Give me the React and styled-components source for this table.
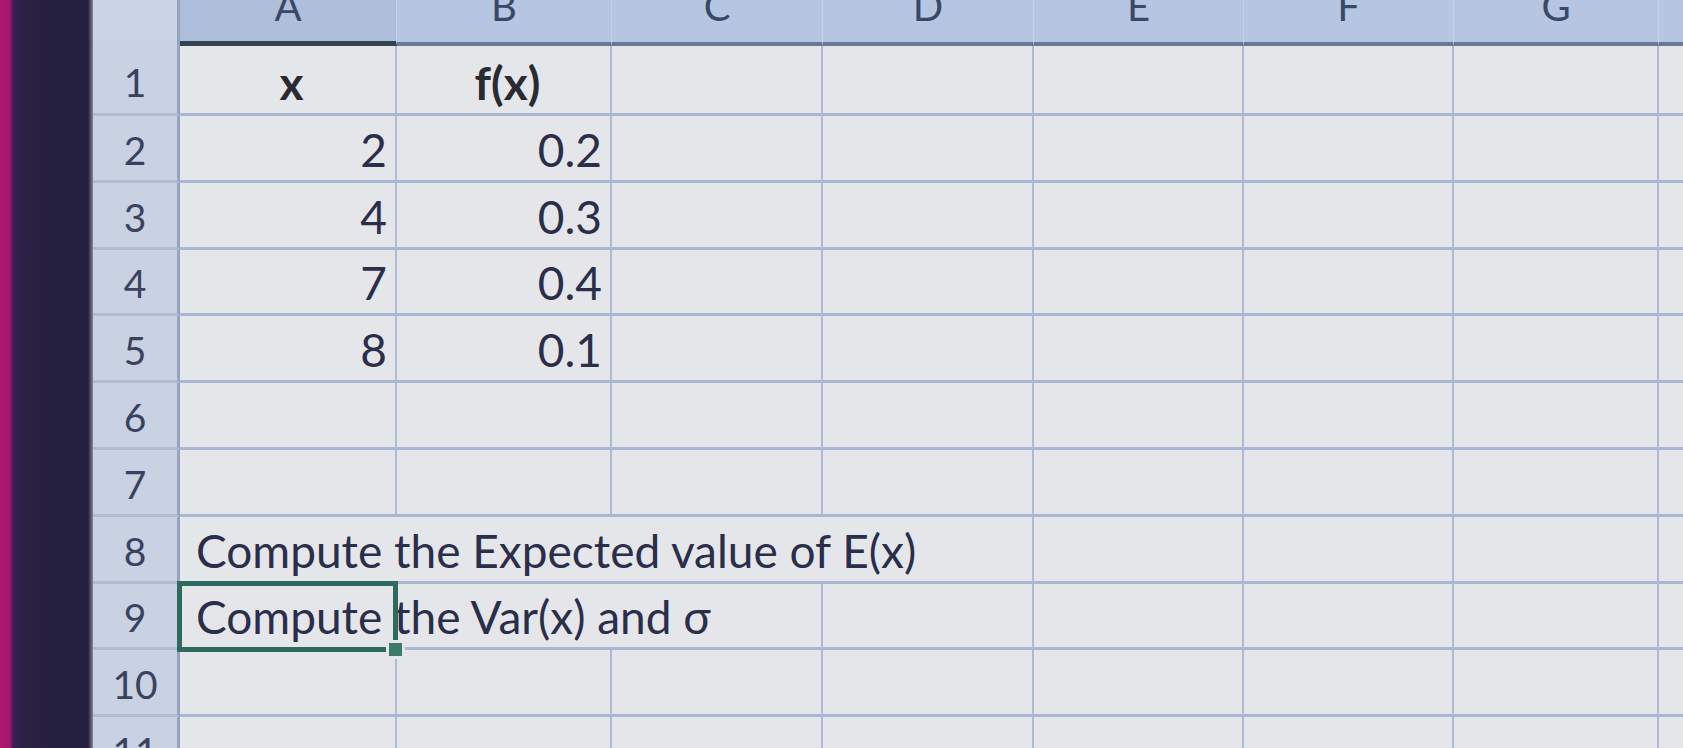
import React from "react";
import styled, { createGlobalStyle } from "styled-components";

const COL_WIDTHS = [217, 215, 211, 211, 210, 210, 205, 205];
const LETTERS = ["A", "B", "C", "D", "E", "F", "G", "H"];
const ROW_HEADER_W = 87;

const GlobalStyle = createGlobalStyle`
  html, body { margin: 0; padding: 0; overflow: hidden; background: #e4e6ea; }
  * { box-sizing: border-box; }
`;

const Screen = styled.div`
  display: flex;
  width: 100vw;
  height: 100vh;
  overflow: hidden;
  background: #e4e6ea;
`;

const Bezel = styled.div`
  width: 93px;
  flex-shrink: 0;
  background: linear-gradient(
    to right,
    #b3166f 0px,
    #a0186a 10px,
    #3f1d55 13px,
    #2e2046 20px,
    #272040 40px,
    #252040 88px,
    #5d5868 91px,
    #8d8790 93px
  );
`;

const Sheet = styled.div`
  display: grid;
  grid-template-columns: ${ROW_HEADER_W}px ${COL_WIDTHS.map((w) => w + "px").join(" ")};
  grid-template-rows: 70px 70px;
  grid-auto-rows: 66.8px;
  margin-top: -24px;
  align-content: start;
  flex-shrink: 0;
  font-family: Lato, "Open Sans", "Liberation Sans", sans-serif;
`;

const Corner = styled.div`
  background: #c9d3e4;
  border-right: 3px solid #97a3bf;
`;

const ColHeader = styled.div`
  display: flex;
  align-items: flex-end;
  justify-content: center;
  background: ${(p) => (p.$active ? "#aebfdc" : "#b6c5e1")};
  border-right: 1px solid #c6d0e6;
  border-bottom: ${(p) => (p.$active ? "5px solid #34424e" : "4px solid #6d7898")};
  color: #3a4868;
  font-size: 40px;
  font-weight: 400;
  line-height: 1;
  padding-bottom: ${(p) => (p.$active ? 15 : 16)}px;
`;

const RowHeader = styled.div`
  display: flex;
  align-items: center;
  justify-content: center;
  background: #c8d2e3;
  border-right: 3px solid #97a3bf;
  border-bottom: 3px solid #b0bbd2;
  color: #39435e;
  font-size: 39px;
  font-weight: 400;
  line-height: 1;
  padding-top: 5px;
`;

const Cell = styled.div`
  position: relative;
  display: flex;
  align-items: flex-end;
  justify-content: ${(p) =>
    p.$align === "right" ? "flex-end" : p.$align === "center" ? "center" : "flex-start"};
  grid-column: span ${(p) => p.$span || 1};
  border-right: 2px solid #aebbd7;
  border-bottom: 3px solid #aab7d4;
  padding: 0 8px 7px 16px;
  color: ${(p) => (p.$bold ? "#2a2a33" : "#2a2e4a")};
  font-size: 46px;
  font-weight: ${(p) => (p.$bold ? 700 : 400)};
  line-height: 1;
  white-space: nowrap;
`;

const Selection = styled.div`
  position: absolute;
  z-index: 2;
  left: -3px;
  top: -3px;
  width: ${COL_WIDTHS[0] + 4}px;
  height: 71px;
  border: 5px solid #2f6a60;
  pointer-events: none;
`;

const FillHandle = styled.div`
  position: absolute;
  right: -12px;
  bottom: -12px;
  width: 19px;
  height: 19px;
  background: #3c7a6a;
  border: 3px solid #e4e6ea;
`;

const ROWS = [
  { n: 1, cells: [{ text: "x", bold: true, align: "center" }, { text: "f(x)", bold: true, align: "center" }] },
  { n: 2, cells: [{ text: "2", align: "right" }, { text: "0.2", align: "right" }] },
  { n: 3, cells: [{ text: "4", align: "right" }, { text: "0.3", align: "right" }] },
  { n: 4, cells: [{ text: "7", align: "right" }, { text: "0.4", align: "right" }] },
  { n: 5, cells: [{ text: "8", align: "right" }, { text: "0.1", align: "right" }] },
  { n: 6, cells: [] },
  { n: 7, cells: [] },
  { n: 8, cells: [{ text: "Compute the Expected value of E(x)", span: 4 }] },
  { n: 9, cells: [{ text: "Compute the Var(x) and σ", span: 3, selected: true }] },
  { n: 10, cells: [] },
  { n: 11, cells: [] },
];

function SheetRow({ row }) {
  const out = [<RowHeader key="h">{row.n}</RowHeader>];
  let used = 0;
  row.cells.forEach((c, i) => {
    out.push(
      <Cell key={i} $align={c.align} $bold={c.bold} $span={c.span}>
        {c.text}
        {c.selected && (
          <Selection>
            <FillHandle />
          </Selection>
        )}
      </Cell>
    );
    used += c.span || 1;
  });
  for (let k = used; k < LETTERS.length; k++) {
    out.push(<Cell key={"e" + k} />);
  }
  return out;
}

export default function App() {
  return (
    <>
      <GlobalStyle />
      <Screen>
        <Bezel />
        <Sheet>
          <Corner />
          {LETTERS.map((l, i) => (
            <ColHeader key={l} $active={i === 0}>
              {l}
            </ColHeader>
          ))}
          {ROWS.map((r) => (
            <SheetRow key={r.n} row={r} />
          ))}
        </Sheet>
      </Screen>
    </>
  );
}
